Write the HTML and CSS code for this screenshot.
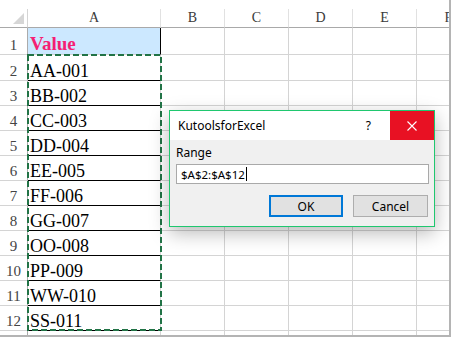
FILE: index.html
```html
<!DOCTYPE html>
<html>
<head>
<meta charset="utf-8">
<link rel="stylesheet" href="styles.css">
</head>
<body>
<div class="sheet">
  <div class="row head">
    <div class="cell corner"><span class="tri"></span></div>
    <div class="cell col">A</div>
    <div class="cell col">B</div>
    <div class="cell col">C</div>
    <div class="cell col">D</div>
    <div class="cell col">E</div>
    <div class="cell col">F</div>
  </div>
  <div class="row r1">
    <div class="cell num">1</div>
    <div class="cell a title-cell">Value</div>
    <div class="cell"></div><div class="cell"></div><div class="cell"></div><div class="cell"></div><div class="cell"></div>
  </div>
  <div class="row r2">
    <div class="cell num">2</div><div class="cell a data">AA-001</div>
    <div class="cell"></div><div class="cell"></div><div class="cell"></div><div class="cell"></div><div class="cell"></div>
  </div>
  <div class="row">
    <div class="cell num">3</div><div class="cell a data">BB-002</div>
    <div class="cell"></div><div class="cell"></div><div class="cell"></div><div class="cell"></div><div class="cell"></div>
  </div>
  <div class="row">
    <div class="cell num">4</div><div class="cell a data">CC-003</div>
    <div class="cell"></div><div class="cell"></div><div class="cell"></div><div class="cell"></div><div class="cell"></div>
  </div>
  <div class="row">
    <div class="cell num">5</div><div class="cell a data">DD-004</div>
    <div class="cell"></div><div class="cell"></div><div class="cell"></div><div class="cell"></div><div class="cell"></div>
  </div>
  <div class="row">
    <div class="cell num">6</div><div class="cell a data">EE-005</div>
    <div class="cell"></div><div class="cell"></div><div class="cell"></div><div class="cell"></div><div class="cell"></div>
  </div>
  <div class="row">
    <div class="cell num">7</div><div class="cell a data">FF-006</div>
    <div class="cell"></div><div class="cell"></div><div class="cell"></div><div class="cell"></div><div class="cell"></div>
  </div>
  <div class="row">
    <div class="cell num">8</div><div class="cell a data">GG-007</div>
    <div class="cell"></div><div class="cell"></div><div class="cell"></div><div class="cell"></div><div class="cell"></div>
  </div>
  <div class="row">
    <div class="cell num">9</div><div class="cell a data">OO-008</div>
    <div class="cell"></div><div class="cell"></div><div class="cell"></div><div class="cell"></div><div class="cell"></div>
  </div>
  <div class="row">
    <div class="cell num">10</div><div class="cell a data">PP-009</div>
    <div class="cell"></div><div class="cell"></div><div class="cell"></div><div class="cell"></div><div class="cell"></div>
  </div>
  <div class="row">
    <div class="cell num">11</div><div class="cell a data">WW-010</div>
    <div class="cell"></div><div class="cell"></div><div class="cell"></div><div class="cell"></div><div class="cell"></div>
  </div>
  <div class="row">
    <div class="cell num">12</div><div class="cell a data last">SS-011</div>
    <div class="cell"></div><div class="cell"></div><div class="cell"></div><div class="cell"></div><div class="cell"></div>
  </div>
  <div class="row r13">
    <div class="cell num"></div><div class="cell"></div>
    <div class="cell"></div><div class="cell"></div><div class="cell"></div><div class="cell"></div><div class="cell"></div>
  </div>

  <svg class="marquee" width="135" height="277" viewBox="0 0 135 277">
    <rect x="1" y="1" width="133" height="275" fill="none" stroke="#217346" stroke-width="2" stroke-dasharray="6 3"/>
  </svg>

  <div class="dialog">
    <div class="dlg-title">
      <span class="dlg-name">KutoolsforExcel</span>
      <span class="help">?</span>
      <span class="close">
        <svg width="10" height="10" viewBox="0 0 10 10"><path d="M0.5 0.5 L9.5 9.5 M9.5 0.5 L0.5 9.5" stroke="#fff" stroke-width="1.1"/></svg>
      </span>
    </div>
    <div class="dlg-body">
      <div class="label">Range</div>
      <div class="input"><span class="val">$A$2:$A$12</span><span class="caret"></span></div>
      <div class="buttons">
        <div class="btn ok">OK</div>
        <div class="btn cancel">Cancel</div>
      </div>
    </div>
  </div>
</div>
</body>
</html>
```

FILE: styles.css
```css
html, body {
  margin: 0;
  padding: 0;
  background: #ffffff;
}

.sheet {
  position: relative;
  width: 449px;
  height: 326px;
  padding-top: 9px;
  box-sizing: content-box;
  overflow: hidden;
  background: #ffffff;
  border-right: 2px solid #b4b4b4;
  border-bottom: 2px solid #b4b4b4;
  font-family: "Liberation Serif", "Times New Roman", serif;
}

.row {
  display: grid;
  grid-template-columns: 28px 133px 64px 64px 64px 64px 64px;
  height: 25px;
}

.cell {
  box-sizing: border-box;
  border-right: 1px solid #d4d4d4;
  border-bottom: 1px solid #d4d4d4;
  min-width: 0;
}

.head {
  height: 19px;
}
.head .cell {
  border-bottom: 1px solid #a9a9a9;
  border-right: 1px solid #e1e1e1;
}
.head .corner {
  position: relative;
  border-right: 1px solid #d4d4d4;
}
.tri {
  position: absolute;
  left: 13px;
  top: 4px;
  width: 0;
  height: 0;
  border-left: 11px solid transparent;
  border-bottom: 11px solid #d6d6d6;
}
.col {
  text-align: center;
  font-size: 14px;
  line-height: 18px;
  color: #3a3a3a;
}

.r1 { height: 27px; }
.r2 { height: 26px; }
.r13 { height: 10px; }

.num {
  border-right: 1px solid #ababab;
  text-align: center;
  font-size: 15px;
  color: #444444;
  display: flex;
  align-items: flex-end;
  justify-content: center;
  line-height: 15px;
  padding-bottom: 1px;
}

.a.title-cell {
  background: #cce8ff;
  border-right: 1px solid #000000;
  color: #f51f74;
  font-weight: bold;
  font-size: 19px;
  line-height: 19px;
  display: flex;
  align-items: flex-end;
  padding: 0 0 1px 2px;
}

.a.data {
  border-bottom: 1px solid #000000;
  color: #000000;
  font-size: 18px;
  line-height: 18px;
  display: flex;
  align-items: flex-end;
  padding: 0 0 0 2px;
}

.marquee {
  position: absolute;
  left: 27px;
  top: 54px;
}

/* dialog */
.dialog {
  position: absolute;
  left: 169px;
  top: 110px;
  width: 266px;
  height: 117px;
  box-sizing: border-box;
  border: 1px solid #1fc76f;
  background: #f0f0f0;
  box-shadow: 0 6px 18px rgba(0, 0, 0, 0.28);
  font-family: "Noto Sans", "Open Sans", sans-serif;
  font-size: 11.5px;
  color: #000000;
  display: flex;
  flex-direction: column;
}

.dlg-title {
  height: 29px;
  background: #ffffff;
  display: flex;
  align-items: center;
}
.dlg-name {
  flex: 1;
  padding-left: 8px;
  font-size: 12px;
}
.help {
  margin-right: 19px;
  font-size: 12px;
}
.close {
  width: 44px;
  height: 29px;
  background: #e81123;
  display: flex;
  align-items: center;
  justify-content: center;
}

.dlg-body {
  flex: 1;
  padding: 5px 5px 0 6px;
  display: flex;
  flex-direction: column;
}
.label {
  line-height: 16px;
  font-size: 12px;
}
.input {
  margin-top: 3px;
  height: 20px;
  box-sizing: border-box;
  border: 1px solid #a9a9a9;
  background: #ffffff;
  display: flex;
  align-items: center;
  padding-left: 4px;
  font-size: 11.5px;
}
.caret {
  display: inline-block;
  width: 1px;
  height: 14px;
  background: #000000;
  margin-left: 1px;
}
.buttons {
  margin-top: 11px;
  display: flex;
  justify-content: flex-end;
  gap: 10px;
  padding-right: 1px;
}
.btn {
  height: 22px;
  box-sizing: border-box;
  background: #e1e1e1;
  display: flex;
  align-items: center;
  justify-content: center;
  font-size: 12px;
}
.ok {
  width: 74px;
  border: 2px solid #0078d7;
}
.cancel {
  width: 75px;
  border: 1px solid #adadad;
}
```
